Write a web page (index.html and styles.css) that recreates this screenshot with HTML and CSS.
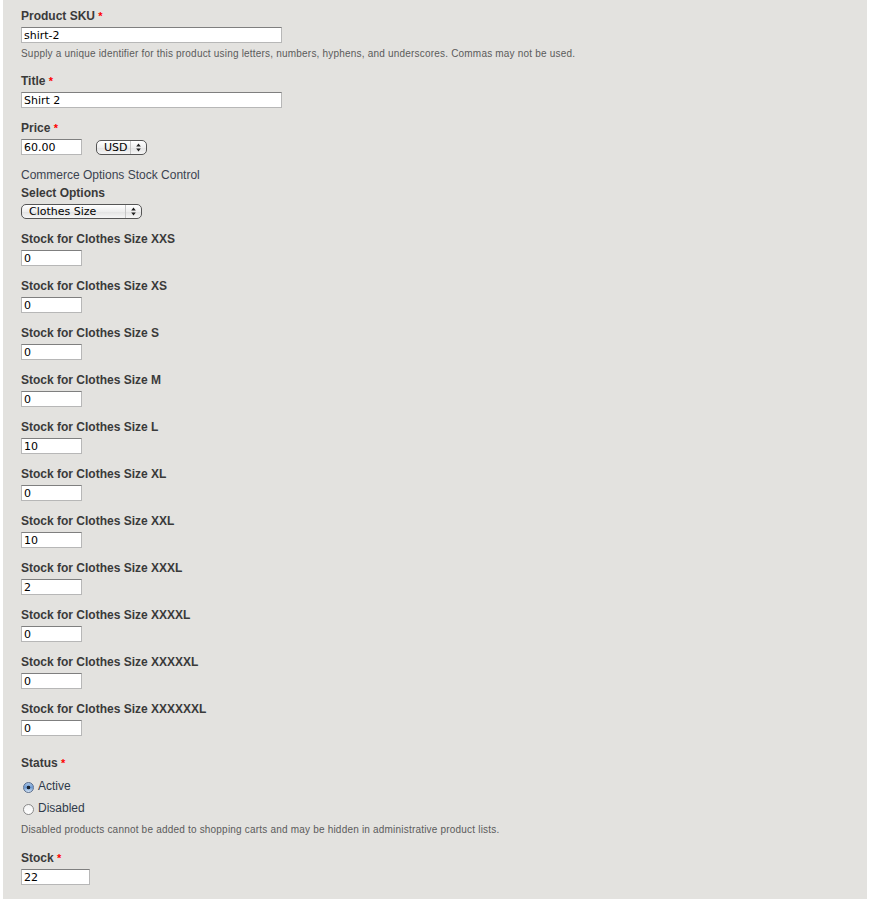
FILE: index.html
```html
<!DOCTYPE html>
<html lang="en">
<head>
  <meta charset="UTF-8">
  <title>Edit product</title>
  <link rel="stylesheet" href="styles.css">
</head>
<body>
  <!-- product form -->
  <form class="product-form">
    <div class="form-item">
      <label for="sku">Product SKU <span class="req">*</span></label>
      <input type="text" id="sku" class="text wide" value="shirt-2">
      <div class="description">Supply a unique identifier for this product using letters, numbers, hyphens, and underscores. Commas may not be used.</div>
    </div>

    <div class="form-item">
      <label for="title">Title <span class="req">*</span></label>
      <input type="text" id="title" class="text wide" value="Shirt 2">
    </div>

    <div class="form-item">
      <label for="price">Price <span class="req">*</span></label>
      <div class="price-row">
        <input type="text" id="price" class="text short" value="60.00">
        <div class="select-box currency">
          <select><option>USD</option></select>
          <span class="arrows"><svg width="5" height="9" viewBox="0 0 5 9"><path d="M2.5 0.5 L4.8 3.6 L0.2 3.6 Z M2.5 8.5 L4.8 5.4 L0.2 5.4 Z" fill="#222"/></svg></span>
        </div>
      </div>
    </div>

    <div class="form-item">
      <div class="group-title">Commerce Options Stock Control</div>
      <label for="opts">Select Options</label>
      <div class="select-box options">
        <select id="opts"><option>Clothes Size</option></select>
        <span class="arrows"><svg width="5" height="9" viewBox="0 0 5 9"><path d="M2.5 0.5 L4.8 3.6 L0.2 3.6 Z M2.5 8.5 L4.8 5.4 L0.2 5.4 Z" fill="#222"/></svg></span>
      </div>
    </div>

    <div class="form-item">
      <label>Stock for Clothes Size XXS</label>
      <input type="text" class="text short" value="0">
    </div>
    <div class="form-item">
      <label>Stock for Clothes Size XS</label>
      <input type="text" class="text short" value="0">
    </div>
    <div class="form-item">
      <label>Stock for Clothes Size S</label>
      <input type="text" class="text short" value="0">
    </div>
    <div class="form-item">
      <label>Stock for Clothes Size M</label>
      <input type="text" class="text short" value="0">
    </div>
    <div class="form-item">
      <label>Stock for Clothes Size L</label>
      <input type="text" class="text short" value="10">
    </div>
    <div class="form-item">
      <label>Stock for Clothes Size XL</label>
      <input type="text" class="text short" value="0">
    </div>
    <div class="form-item">
      <label>Stock for Clothes Size XXL</label>
      <input type="text" class="text short" value="10">
    </div>
    <div class="form-item">
      <label>Stock for Clothes Size XXXL</label>
      <input type="text" class="text short" value="2">
    </div>
    <div class="form-item">
      <label>Stock for Clothes Size XXXXL</label>
      <input type="text" class="text short" value="0">
    </div>
    <div class="form-item">
      <label>Stock for Clothes Size XXXXXL</label>
      <input type="text" class="text short" value="0">
    </div>
    <div class="form-item">
      <label>Stock for Clothes Size XXXXXXL</label>
      <input type="text" class="text short" value="0">
    </div>

    <div class="form-item status">
      <label>Status <span class="req">*</span></label>
      <div class="radio-row">
        <input type="radio" name="status" id="st-active" checked>
        <label for="st-active" class="option">Active</label>
      </div>
      <div class="radio-row">
        <input type="radio" name="status" id="st-disabled">
        <label for="st-disabled" class="option">Disabled</label>
      </div>
      <div class="description">Disabled products cannot be added to shopping carts and may be hidden in administrative product lists.</div>
    </div>

    <div class="form-item">
      <label for="stock">Stock <span class="req">*</span></label>
      <input type="text" id="stock" class="text stock" value="22">
    </div>
  </form>
</body>
</html>
```

FILE: styles.css
```css
body, html {
  margin: 0;
  padding: 0;
  background: #ffffff;
}

.product-form {
  margin-left: 3px;
  width: 864px;
  min-height: 899px;
  box-sizing: border-box;
  padding: 9px 18px 0 18px;
  background-color: #e3e2df;
  font-family: "Liberation Sans", Arial, sans-serif;
  color: #333;
}

.form-item {
  margin-bottom: 13px;
}

.form-item > label {
  display: block;
  font-size: 12px;
  font-weight: bold;
  line-height: 15px;
  margin-bottom: 3px;
  color: #3a3a3a;
}

.req {
  color: #f00;
  font-size: 11px;
}

/* text fields */
.text {
  display: block;
  box-sizing: border-box;
  height: 16px;
  margin: 0;
  padding: 0 2px;
  border: 1px solid #b7b7b7;
  border-top-color: #7f7f7f;
  background: #fff;
  font-family: "DejaVu Sans", sans-serif;
  font-size: 11px;
  color: #000;
  outline: none;
}

.wide {
  width: 261px;
}

.short {
  width: 61px;
}

.stock {
  width: 69px;
}

.description {
  margin-top: 4px;
  font-size: 10px;
  line-height: 14px;
  letter-spacing: 0.2px;
  color: #5b5b5b;
}

.price-row {
  display: flex;
  align-items: center;
  gap: 14px;
}

/* aqua style select */
.select-box {
  display: flex;
  align-items: stretch;
  box-sizing: border-box;
  height: 15px;
  border: 1px solid #555;
  border-radius: 5px;
  background: linear-gradient(#ffffff, #eeeeee 50%, #e2e2e2 51%, #f6f6f6);
  overflow: hidden;
}

.select-box select {
  flex: 1;
  appearance: none;
  -webkit-appearance: none;
  border: none;
  background: transparent;
  margin: 0;
  padding: 0 0 0 7px;
  height: 13px;
  font-family: "DejaVu Sans", sans-serif;
  font-size: 11px;
  line-height: 13px;
  color: #000;
  outline: none;
}

.select-box .arrows {
  width: 15px;
  display: flex;
  align-items: center;
  justify-content: center;
  border-left: 1px solid #c4c4c4;
}

.currency {
  width: 51px;
  margin-top: 1px;
}

.options {
  width: 121px;
  margin-top: 1px;
  margin-bottom: 2px;
}

.group-title {
  font-size: 12px;
  line-height: 15px;
  margin-bottom: 3px;
  color: #3b4350;
}

.status {
  margin-top: 20px;
  margin-bottom: 14px;
}

.status > label {
  margin-bottom: 4px;
}

.radio-row {
  display: flex;
  align-items: center;
  height: 22px;
  padding-left: 2px;
}

.radio-row input {
  appearance: none;
  -webkit-appearance: none;
  width: 11px;
  height: 11px;
  margin: 3px 4px 0 0;
  border: 1px solid #8a8a8a;
  border-radius: 50%;
  background: linear-gradient(#f4f4f4, #ffffff);
  box-sizing: border-box;
}

.radio-row input:checked {
  border-color: #5a6e8e;
  background: radial-gradient(circle, #1c2430 0 1.6px, transparent 2.1px), linear-gradient(#a8c4e6, #6d9ad2 50%, #d7e6f6);
}

.radio-row .option {
  font-size: 12px;
  color: #2f3a4a;
}
```
